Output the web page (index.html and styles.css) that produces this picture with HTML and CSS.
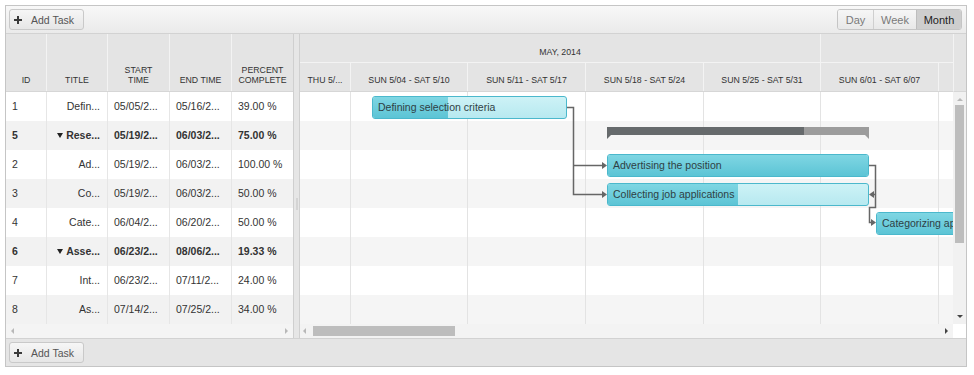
FILE: index.html
```html
<!DOCTYPE html>
<html>
<head>
<meta charset="utf-8">
<title>Gantt</title>
<link rel="stylesheet" href="styles.css">
</head>
<body>
<div class="gantt">
  <div class="toolbar">
    <button class="btn"><svg class="plus" width="8" height="8" viewBox="0 0 8 8"><path d="M4 0v8M0 4h8" stroke="#3a3a3a" stroke-width="2"/></svg><span>Add Task</span></button>
    <div class="views"><span class="view v-day">Day</span><span class="view v-week">Week</span><span class="view v-month sel">Month</span></div>
  </div>
  <div class="content">
    <div class="grid">
      <div class="grid-head">
        <div class="hc w-id">ID</div>
        <div class="hc w-title">TITLE</div>
        <div class="hc w-date">START<br>TIME</div>
        <div class="hc w-date">END TIME</div>
        <div class="hc w-pct">PERCENT<br>COMPLETE</div>
      </div>
      <div class="grid-body">
        <div class="row"><div class="c w-id">1</div><div class="c w-title">Defin...</div><div class="c w-date">05/05/2...</div><div class="c w-date">05/16/2...</div><div class="c w-pct">39.00 %</div></div>
        <div class="row alt sum"><div class="c w-id">5</div><div class="c w-title"><span class="tri"></span>Rese...</div><div class="c w-date">05/19/2...</div><div class="c w-date">06/03/2...</div><div class="c w-pct">75.00 %</div></div>
        <div class="row"><div class="c w-id">2</div><div class="c w-title">Ad...</div><div class="c w-date">05/19/2...</div><div class="c w-date">06/03/2...</div><div class="c w-pct">100.00 %</div></div>
        <div class="row alt"><div class="c w-id">3</div><div class="c w-title">Co...</div><div class="c w-date">05/19/2...</div><div class="c w-date">06/03/2...</div><div class="c w-pct">50.00 %</div></div>
        <div class="row"><div class="c w-id">4</div><div class="c w-title">Cate...</div><div class="c w-date">06/04/2...</div><div class="c w-date">06/20/2...</div><div class="c w-pct">50.00 %</div></div>
        <div class="row alt sum"><div class="c w-id">6</div><div class="c w-title"><span class="tri"></span>Asse...</div><div class="c w-date">06/23/2...</div><div class="c w-date">08/06/2...</div><div class="c w-pct">19.33 %</div></div>
        <div class="row"><div class="c w-id">7</div><div class="c w-title">Int...</div><div class="c w-date">06/23/2...</div><div class="c w-date">07/11/2...</div><div class="c w-pct">24.00 %</div></div>
        <div class="row alt"><div class="c w-id">8</div><div class="c w-title">As...</div><div class="c w-date">07/14/2...</div><div class="c w-date">07/25/2...</div><div class="c w-pct">34.00 %</div></div>
      </div>
      <div class="grid-hscroll"><span class="arr a-left light"></span><span class="arr a-right light"></span></div>
    </div>
    <div class="splitter"><span class="grip"></span></div>
    <div class="timeline">
      <div class="tl-main">
        <div class="tl-head">
          <div class="tl-months"><div class="tm tm-may">MAY, 2014</div><div class="tm tm-jun"></div></div>
          <div class="tl-weeks">
            <div class="tw wk0">THU 5/...</div>
            <div class="tw wk1">SUN 5/04 - SAT 5/10</div>
            <div class="tw wk2">SUN 5/11 - SAT 5/17</div>
            <div class="tw wk2">SUN 5/18 - SAT 5/24</div>
            <div class="tw wk1">SUN 5/25 - SAT 5/31</div>
            <div class="tw wk2">SUN 6/01 - SAT 6/07</div>
            <div class="tw wk6"></div>
          </div>
        </div>
        <div class="tl-body">
          <div class="trow"></div><div class="trow alt"></div><div class="trow"></div><div class="trow alt"></div>
          <div class="trow"></div><div class="trow alt"></div><div class="trow"></div><div class="trow alt"></div>
          <div class="tl-lines">
            <div class="ln wk0"></div><div class="ln wk1"></div><div class="ln wk2"></div><div class="ln wk2"></div><div class="ln wk1"></div><div class="ln wk2"></div><div class="ln wk6"></div>
          </div>
          <svg class="deps" width="653" height="232" viewBox="0 0 653 232">
            <g fill="none" stroke="#666" stroke-width="1.5">
              <path d="M266 15.5H273.5V102.5H302"/>
              <path d="M273.5 73.5H302"/>
              <path d="M568 73.5H575.5V115.5H569.5V130.5H571"/>
              <path d="M575.5 102.5H574"/>
            </g>
            <g fill="#666">
              <path d="M307 73.5L302 70V77Z"/>
              <path d="M307 102.5L302 99V106Z"/>
              <path d="M576 130.5L571 127V134Z"/>
              <path d="M569 102.5L574 99V106Z"/>
            </g>
          </svg>
          <div class="bar b-def"><div class="prog" style="width:39%"></div><span class="bt">Defining selection criteria</span></div>
          <div class="summary"><div class="sprog" style="width:75%"></div></div>
          <div class="bar b-adv"><div class="prog" style="width:100%"></div><span class="bt">Advertising the position</span></div>
          <div class="bar b-col"><div class="prog" style="width:50%"></div><span class="bt">Collecting job applications</span></div>
          <div class="bar b-cat"><div class="prog" style="width:100%"></div><span class="bt">Categorizing applications</span></div>
        </div>
        <div class="tl-hscroll"><span class="arr a-left light"></span><span class="hthumb"></span><span class="arr a-right"></span></div>
      </div>
      <div class="tl-gutter">
        <div class="g-head"></div>
        <div class="vscroll"><span class="arr a-up light"></span><span class="vthumb"></span><span class="arr a-down"></span></div>
        <div class="corner"></div>
      </div>
    </div>
  </div>
  <div class="footer">
    <button class="btn"><svg class="plus" width="8" height="8" viewBox="0 0 8 8"><path d="M4 0v8M0 4h8" stroke="#3a3a3a" stroke-width="2"/></svg><span>Add Task</span></button>
  </div>
</div>
</body>
</html>
```
FILE: styles.css
```css
* { box-sizing: border-box; margin: 0; padding: 0; }
body {
  margin: 0;
  padding: 5px;
  background: #fff;
  font-family: "Liberation Sans", Arial, sans-serif;
  font-size: 10.5px;
  color: #333;
}
.gantt {
  width: 962px;
  height: 362px;
  border: 1px solid #c5c5c5;
  display: flex;
  flex-direction: column;
  background: #fff;
  overflow: hidden;
}
.toolbar {
  height: 28px;
  flex: none;
  display: flex;
  align-items: flex-start;
  justify-content: space-between;
  padding: 3px 4px 0 3px;
  background: linear-gradient(#f8f8f8, #eaeaea);
  border-bottom: 1px solid #d2d2d2;
}
.btn {
  width: 75px;
  height: 21px;
  display: flex;
  align-items: center;
  gap: 9px;
  padding-left: 4px;
  border: 1px solid #c9c9c9;
  border-radius: 3px;
  background: linear-gradient(#f6f6f6, #e6e6e6);
  font-family: "Liberation Sans", Arial, sans-serif;
  font-size: 10.5px;
  color: #555;
}
.plus { flex: none; }
.views {
  display: flex;
  height: 21px;
  border: 1px solid #c5c5c5;
  border-radius: 3px;
  overflow: hidden;
  font-size: 11px;
}
.view {
  display: flex;
  align-items: center;
  justify-content: center;
  background: linear-gradient(#f6f6f6, #e8e8e8);
  color: #7a7a7a;
  border-left: 1px solid #cfcfcf;
}
.view:first-child { border-left: 0; }
.v-day { width: 35px; }
.v-week { width: 43px; }
.v-month { width: 45px; }
.view.sel { background: #cecece; color: #222; border-left-color: #bdbdbd; }

.content {
  flex: 1;
  display: flex;
  min-height: 0;
}
.grid {
  width: 288px;
  flex: none;
  display: flex;
  flex-direction: column;
  border-right: 1px solid #cfcfcf;
}
.grid-head {
  height: 58px;
  display: flex;
  background: #e4e4e4;
  border-bottom: 1px solid #d6d6d6;
}
.hc {
  display: flex;
  align-items: flex-end;
  justify-content: center;
  text-align: center;
  padding-bottom: 6px;
  font-size: 8.75px;
  line-height: 10px;
  color: #333;
  border-right: 1px solid #f3f3f3;
}
.w-id { width: 41px; }
.w-title { width: 61px; }
.w-date { width: 62px; }
.w-pct { width: 61px; }
.hc.w-pct { border-right: 0; }
.grid-body { height: 232px; }
.row {
  height: 29px;
  display: flex;
  background: #fff;
}
.row.alt { background: #f2f2f2; }
.row.sum { font-weight: bold; }
.c {
  line-height: 29px;
  padding: 0 6px;
  white-space: nowrap;
  overflow: hidden;
  border-right: 1px solid #e6e6e6;
}
.c.w-pct { border-right: 0; }
.c.w-title { text-align: right; padding-right: 7px; }
.tri {
  display: inline-block;
  width: 0;
  height: 0;
  border-left: 3px solid transparent;
  border-right: 3px solid transparent;
  border-top: 5px solid #222;
  margin-right: 3px;
  vertical-align: 1px;
}
.grid-hscroll {
  height: 14px;
  background: #f4f4f4;
  display: flex;
  align-items: center;
  justify-content: space-between;
  padding: 0 5px;
}
.arr {
  width: 0;
  height: 0;
  display: block;
}
.a-left { border-top: 3px solid transparent; border-bottom: 3px solid transparent; border-right: 3px solid #444; }
.a-right { border-top: 3px solid transparent; border-bottom: 3px solid transparent; border-left: 3px solid #444; }
.a-up { border-left: 3px solid transparent; border-right: 3px solid transparent; border-bottom: 3px solid #444; }
.a-down { border-left: 3px solid transparent; border-right: 3px solid transparent; border-top: 3px solid #444; }
.a-left.light { border-right-color: #b8b8b8; }
.a-right.light { border-left-color: #b8b8b8; }
.a-up.light { border-bottom-color: #b8b8b8; }

.splitter {
  flex: none;
  background: #e6e6e6;
  border-right: 1px solid #d0d0d0;
  width: 6px;
  display: flex;
  align-items: center;
  justify-content: center;
}
.grip { width: 2px; height: 12px; background: #d4d4d4; margin-top: 36px; }

.timeline {
  flex: 1;
  display: flex;
  min-width: 0;
}
.tl-main {
  width: 653px;
  flex: none;
  display: flex;
  flex-direction: column;
}
.tl-head {
  height: 58px;
  background: #e4e4e4;
  font-size: 8.75px;
  color: #333;
}
.tl-months {
  height: 29px;
  display: flex;
  border-bottom: 1px solid #f3f3f3;
}
.tm {
  display: flex;
  align-items: flex-end;
  justify-content: center;
  padding-bottom: 5px;
}
.tm-may { width: 521px; border-right: 1px solid #f3f3f3; }
.tm-jun { flex: 1; }
.tl-weeks {
  height: 29px;
  display: flex;
  border-bottom: 1px solid #d6d6d6;
}
.tw {
  display: flex;
  align-items: flex-end;
  justify-content: center;
  padding: 0 4px 6px;
  white-space: nowrap;
  overflow: hidden;
  border-right: 1px solid #f3f3f3;
}
.wk0 { width: 51px; flex: none; }
.wk1 { width: 117px; flex: none; }
.wk2 { width: 118px; flex: none; }
.wk6 { flex: 1; border-right: 0; }
.tl-body {
  height: 232px;
  position: relative;
  overflow: hidden;
}
.trow { height: 29px; background: #fff; }
.trow.alt { background: #f5f5f5; }
.tl-lines {
  position: absolute;
  inset: 0;
  display: flex;
}
.ln { border-right: 1px solid #e3e3e3; height: 100%; }
.ln.wk6 { border-right: 0; }
.deps { position: absolute; left: 0; top: 0; }
.bar {
  position: absolute;
  height: 23px;
  border: 1px solid #4bb8cc;
  border-radius: 3px;
  background: linear-gradient(#cdf2f6, #b7e9f0);
  overflow: hidden;
}
.prog {
  position: absolute;
  left: 0;
  top: 0;
  bottom: 0;
  background: linear-gradient(#7fd6e3, #5cc4d5);
}
.bt {
  position: relative;
  display: block;
  line-height: 21px;
  padding-left: 5px;
  white-space: nowrap;
  color: #2f3f44;
  font-size: 10.5px;
}
.b-def { left: 72px; top: 4px; width: 195px; }
.b-adv { left: 307px; top: 62px; width: 262px; }
.b-col { left: 307px; top: 91px; width: 262px; }
.b-cat { left: 576px; top: 120px; width: 200px; }
.summary {
  position: absolute;
  left: 307px;
  top: 35px;
  width: 262px;
  height: 8px;
  background: #9c9c9c;
}
.sprog { height: 100%; background: #666a6c; }
.summary::before,
.summary::after {
  content: "";
  position: absolute;
  top: 8px;
  width: 0;
  height: 0;
  border-top: 4px solid #666a6c;
}
.summary::before { left: 0; border-right: 4px solid transparent; }
.summary::after { right: 0; border-left: 4px solid transparent; border-top-color: #9c9c9c; }
.tl-hscroll {
  height: 14px;
  background: #f3f3f3;
  display: flex;
  align-items: center;
  padding: 0 5px 0 3px;
}
.hthumb {
  width: 142px;
  height: 10px;
  background: #bdbdbd;
  margin-left: 7px;
}
.tl-hscroll .a-right { margin-left: auto; }
.tl-gutter {
  flex: 1;
  display: flex;
  flex-direction: column;
}
.g-head {
  height: 58px;
  background: #e4e4e4;
  border-left: 1px solid #f3f3f3;
  border-bottom: 1px solid #d6d6d6;
}
.vscroll {
  height: 232px;
  background: #f1f1f1;
  display: flex;
  flex-direction: column;
  align-items: center;
  padding: 6px 0 6px;
}
.vthumb {
  width: 9px;
  height: 138px;
  background: #bdbdbd;
  margin-top: 4px;
}
.vscroll .a-down { margin-top: auto; }
.corner { flex: 1; background: #fff; }
.footer {
  height: 28px;
  flex: none;
  border-top: 1px solid #d2d2d2;
  background: #e5e5e5;
  padding: 3px 0 0 3px;
}
```
